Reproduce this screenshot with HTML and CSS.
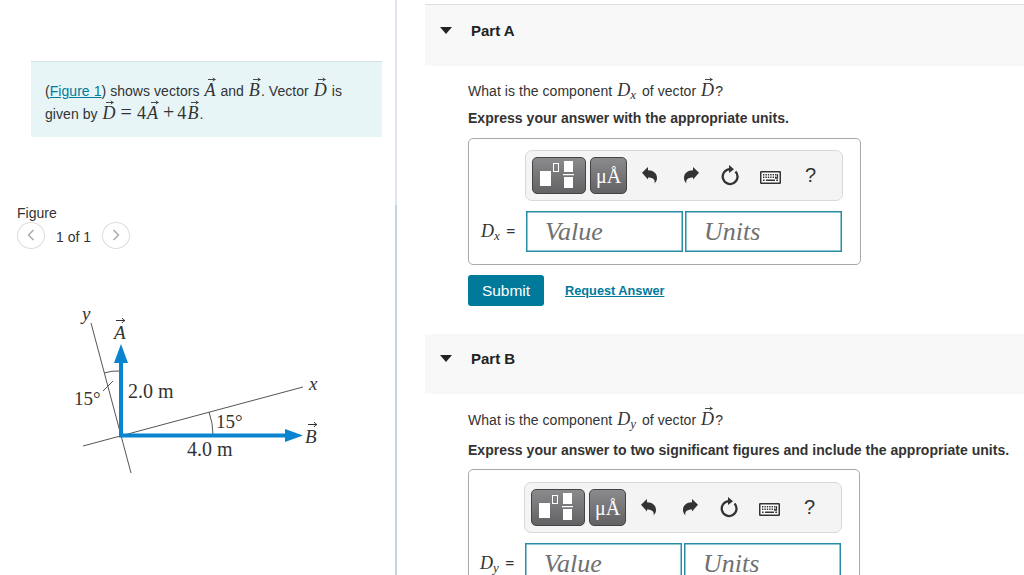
FILE: index.html
```
<!DOCTYPE html>
<html lang="en">
<head>
    <meta charset="UTF-8">
    <meta name="viewport" content="width=device-width, initial-scale=1.0">
    <title>Vector Components</title>
    <link rel="stylesheet" href="styles.css">
</head>
<body>
    <!-- Shared icons -->
    <svg class="icon-defs" aria-hidden="true">
        <symbol id="arrow" viewBox="0 0 9 5">
            <path d="M0 2.5H8M5.5 .5Q6.3 2.2 8.3 2.5Q6.3 2.8 5.5 4.5" fill="none" stroke="currentColor" stroke-width="1"/>
        </symbol>
        <symbol id="undo" viewBox="0 0 16 17">
            <path d="M0 5.800 6 0v3.300C11.5 3.300 15 6.4 15 11c0 2-.7 3.7-2.4 5.4.8-4-1.600-6-6.600-6v2z" fill="#333"/>
        </symbol>
        <symbol id="reset" viewBox="0 0 18 21">
            <path d="M9 4.2A7.4 7.4 0 1 0 14.5 6.5" fill="none" stroke="#333" stroke-width="2.3"/>
            <path d="M8 0 13 4.2 8 8z" fill="#333"/>
        </symbol>
        <symbol id="keyboard" viewBox="0 0 21 13">
            <rect x=".75" y=".75" width="19.5" height="11.5" rx=".5" fill="#fff" stroke="#333" stroke-width="1.5"/>
            <path d="M3 3.8H18M3 6.3H16" stroke="#333" stroke-width="1.4" stroke-dasharray="1.4 1"/>
            <path d="M17.4 3.2V7H15M3 9.3h1.6M6 9.3h9M16.2 9.3H18" fill="none" stroke="#333" stroke-width="1.4"/>
        </symbol>
        <symbol id="template" viewBox="0 0 38 29">
            <path d="M0 10h11v15H0zM24 0h9v11h-9zM24 16h9v11h-9zM23 13h11v1.200H23z" fill="#fff"/>
            <rect x="13.500" y="2.500" width="5" height="8" fill="none" stroke="#fff"/>
        </symbol>
    </svg>

    <div class="page">
        <!-- Problem and figure -->
        <div class="left-panel">
            <div class="problem">
                (<a href="#">Figure 1</a>) shows vectors <span class="vec">A<svg><use href="#arrow"/></svg></span> and <span class="vec">B<svg><use href="#arrow"/></svg></span>. Vector <span class="vec">D<svg><use href="#arrow"/></svg></span> is<br>
                given by <span class="vec">D<svg><use href="#arrow"/></svg></span><span class="math eq">=</span><span class="math">4</span><span class="vec">A<svg><use href="#arrow"/></svg></span><span class="math plus">+</span><span class="math">4</span><span class="vec">B<svg><use href="#arrow"/></svg></span>.
            </div>

            <div class="figure-title">Figure</div>
            <div class="pager">
                <button class="page-button"><svg width="8" height="12"><path d="M6.5 1 1.5 6l5 5"/></svg></button>
                <span>1 of 1</span>
                <button class="page-button"><svg width="8" height="12"><path d="M1.5 1l5 5-5 5"/></svg></button>
            </div>

            <svg class="figure" width="270" height="180" viewBox="65 300 270 180">
                <g fill="none" stroke="#555" stroke-width="1">
                    <path d="M91 323 131 473M83 446 303 387"/>
                    <path d="M104 373Q112 370.500 120 371M103 391 113 381M209 412Q213 423 213 435"/>
                </g>
                <g fill="none" stroke="#0a84cf" stroke-width="4">
                    <path d="M121 437.500V361M119 435.500H287"/>
                </g>
                <path d="M121 344 128 363H114zM303 435.500 285 429V442z" fill="#0a84cf"/>
                <g class="figure-text">
                    <text x="82" y="320" class="var">y</text>
                    <text x="114" y="339" class="var">A</text>
                    <text x="309" y="390" class="var">x</text>
                    <text x="305" y="443" class="var">B</text>
                    <text x="74" y="405">15°</text>
                    <text x="128" y="398" class="length">2.0 m</text>
                    <text x="216" y="428">15°</text>
                    <text x="187" y="456" class="length">4.0 m</text>
                </g>
                <g fill="none" stroke="#333">
                    <path d="M116 320.500h9M122 318q1 2 3 2.500q-2 .5-3 2.500"/>
                    <path d="M308 424.500h9M314 422q1 2 3 2.500q-2 .5-3 2.500"/>
                </g>
            </svg>
        </div>

        <div class="divider"><div class="scroll-thumb"></div></div>

        <!-- Questions -->
        <div class="right-panel">
            <div class="part part-a">
                <div class="part-header"><span class="triangle"></span>Part A</div>
                <div class="part-body">
                    <p class="question">What is the component <span class="math comp"><i>D</i><sub>x</sub></span> of vector <span class="vec">D<svg><use href="#arrow"/></svg></span>?</p>
                    <p class="instruction">Express your answer with the appropriate units.</p>
                    <div class="answer-box">
                        <div class="toolbar">
                            <button class="tool wide"><svg width="38" height="29"><use href="#template"/></svg></button>
                            <button class="tool">μÅ</button>
                            <svg class="undo" width="16" height="17"><use href="#undo"/></svg>
                            <svg class="redo" width="16" height="17"><use href="#undo"/></svg>
                            <svg class="reset" width="18" height="21"><use href="#reset"/></svg>
                            <svg class="keyboard" width="21" height="13"><use href="#keyboard"/></svg>
                            <span class="help">?</span>
                        </div>
                        <div class="fields">
                            <label class="math"><i>D</i><sub>x</sub> <b>=</b></label>
                            <input type="text" placeholder="Value">
                            <input type="text" placeholder="Units">
                        </div>
                    </div>
                    <div class="actions">
                        <button class="submit">Submit</button>
                        <a href="#">Request Answer</a>
                    </div>
                </div>
            </div>

            <div class="part part-b">
                <div class="part-header"><span class="triangle"></span>Part B</div>
                <div class="part-body">
                    <p class="question">What is the component <span class="math comp"><i>D</i><sub>y</sub></span> of vector <span class="vec">D<svg><use href="#arrow"/></svg></span>?</p>
                    <p class="instruction">Express your answer to two significant figures and include the appropriate units.</p>
                    <div class="answer-box">
                        <div class="toolbar">
                            <button class="tool wide"><svg width="38" height="29"><use href="#template"/></svg></button>
                            <button class="tool">μÅ</button>
                            <svg class="undo" width="16" height="17"><use href="#undo"/></svg>
                            <svg class="redo" width="16" height="17"><use href="#undo"/></svg>
                            <svg class="reset" width="18" height="21"><use href="#reset"/></svg>
                            <svg class="keyboard" width="21" height="13"><use href="#keyboard"/></svg>
                            <span class="help">?</span>
                        </div>
                        <div class="fields">
                            <label class="math"><i>D</i><sub>y</sub> <b>=</b></label>
                            <input type="text" placeholder="Value">
                            <input type="text" placeholder="Units">
                        </div>
                    </div>
                </div>
            </div>
        </div>
    </div>
</body>
</html>
```

FILE: styles.css
```
* {
    box-sizing: border-box;
}
body {
    margin: 0;
    height: 575px;
    overflow: hidden;
    background: #fff;
    color: #333;
    font-family: "Liberation Sans", Arial, sans-serif;
    font-size: 14px;
}
button {
    padding: 0;
    font-family: inherit;
}
a {
    color: #007a9c;
}
.icon-defs {
    display: none;
}
.page {
    display: flex;
    height: 575px;
}
.left-panel {
    width: 395px;
    flex-shrink: 0;
}
.problem {
    width: 351px;
    height: 76px;
    margin: 61px 0 0 31px;
    padding: 18px 0 0 14px;
    background: #e7f5f7;
    border-top: 1px solid #d0e3e3;
    line-height: 23px;
    letter-spacing: 0.05px;
    white-space: nowrap;
}
.math, .vec {
    font-family: "Liberation Serif", "Times New Roman", serif;
    font-size: 18px;
    line-height: 1;
}
.vec {
    position: relative;
    display: inline-block;
    padding: 0 1px;
    font-style: italic;
}
/* arrow over the vector name */
.vec svg {
    position: absolute;
    top: -4px;
    left: 5px;
    width: 8px;
    height: 5px;
}
.eq {
    margin: 0 5px 0 4px;
    font-size: 20px;
    line-height: 0;
}
.plus {
    margin: 0 3px 0 4px;
    font-size: 20px;
    line-height: 0;
}
.figure-title {
    margin: 68px 0 0 17px;
    line-height: 16px;
}
.pager {
    display: flex;
    align-items: center;
    height: 28px;
    margin-left: 17px;
}
.pager span {
    margin: 3px 11px 0 11px;
}
.page-button {
    display: flex;
    align-items: center;
    justify-content: center;
    width: 28px;
    height: 27px;
    background: #fff;
    border: 1px solid #ddd;
    border-radius: 50%;
}
.page-button path {
    fill: none;
    stroke: #aaa;
    stroke-width: 1.5;
}
.figure {
    display: block;
    margin: 51px 0 0 65px;
}
.figure-text {
    font-family: "Liberation Serif", "Times New Roman", serif;
    font-size: 19px;
    fill: #333;
}
.figure-text .var {
    font-style: italic;
}
.figure-text .length {
    font-size: 20px;
}
.divider {
    width: 2px;
    flex-shrink: 0;
    padding-top: 205px;
    background: #dfe5ee;
}
.scroll-thumb {
    height: 370px;
    background: #c6d1e2;
}
.right-panel {
    flex: 1;
    min-width: 0;
    margin: 4px 0 0 28px;
}
.part-a {
    height: 330px;
}
.part-header {
    display: flex;
    align-items: center;
    height: 62px;
    padding: 0 0 11px 15px;
    background: #f8f8f8;
    font-size: 15px;
    font-weight: bold;
    color: #222;
}
.part-a .part-header {
    border-top: 1px solid #ddd;
}
.part-b .part-header {
    height: 60px;
}
.triangle {
    margin-right: 19px;
    border: 6px solid transparent;
    border-top: 7px solid #222;
    border-bottom: 0;
}
.part-body {
    padding-left: 43px;
}
.question {
    height: 20px;
    margin: 15px 0 0;
    line-height: 20px;
    letter-spacing: 0.05px;
    white-space: nowrap;
}
.part-b .question {
    margin-top: 16px;
}
.instruction {
    height: 18px;
    margin: 8px 0 0;
    font-weight: bold;
    letter-spacing: 0.025px;
    line-height: 18px;
    white-space: nowrap;
}
.part-b .instruction {
    margin-top: 11px;
}
.comp {
    margin: 0 2px 0 1px;
}
sub {
    font-size: 13px;
    font-style: italic;
    line-height: 0;
    vertical-align: -3px;
}
.answer-box {
    width: 393px;
    height: 127px;
    margin-top: 11px;
    padding: 11px 0 0 12px;
    border: 1px solid #aaa;
    border-radius: 5px;
}
.part-b .answer-box {
    width: 392px;
    margin-top: 10px;
    padding: 12px 0 0 11px;
}
.toolbar {
    display: flex;
    align-items: center;
    width: 318px;
    height: 51px;
    margin-left: 44px;
    padding-left: 6px;
    background: #f4f4f4;
    border: 1px solid #d8d8d8;
    border-radius: 7px;
}
.toolbar svg, .tool {
    flex-shrink: 0;
}
.tool {
    display: flex;
    align-items: center;
    justify-content: center;
    width: 37px;
    height: 37px;
    padding-top: 2px;
    background: linear-gradient(#8b8b8d, #626264);
    border: 1px solid #444;
    border-radius: 5px;
    color: #fff;
    font-family: "Liberation Serif", serif;
    font-size: 20px;
}
.tool.wide {
    width: 54px;
    margin-right: 4px;
    padding: 0;
}
.undo {
    margin-left: 15px;
}
.redo {
    margin-left: 25px;
    transform: scaleX(-1);
}
.reset {
    margin-left: 22px;
}
.keyboard {
    margin: 3px 0 0 21px;
}
.help {
    margin-left: 24px;
    font-size: 20px;
}
.fields {
    display: flex;
    align-items: center;
    margin-top: 10px;
}
.fields label {
    width: 45px;
    flex-shrink: 0;
    padding-bottom: 2px;
    white-space: nowrap;
}
.fields b {
    margin-left: 2px;
    font-size: 16px;
}
.fields input {
    width: 157px;
    height: 41px;
    margin-right: 2px;
    padding: 0 0 0 18px;
    background: #fff;
    border: 1px solid #278da5;
    box-shadow: inset 0 0 0 0.5px #278da5;
    font-family: "Liberation Serif", serif;
    font-size: 26px;
    font-style: italic;
}
.fields input::placeholder {
    color: #707070;
}
.actions {
    display: flex;
    align-items: center;
    margin-top: 10px;
}
.actions a {
    margin-left: 21px;
    font-size: 12.75px;
    font-weight: bold;
}
.submit {
    width: 76px;
    height: 31px;
    background: #007a9a;
    border: 0;
    border-radius: 3px;
    color: #fff;
    font-size: 15.5px;
}
```
